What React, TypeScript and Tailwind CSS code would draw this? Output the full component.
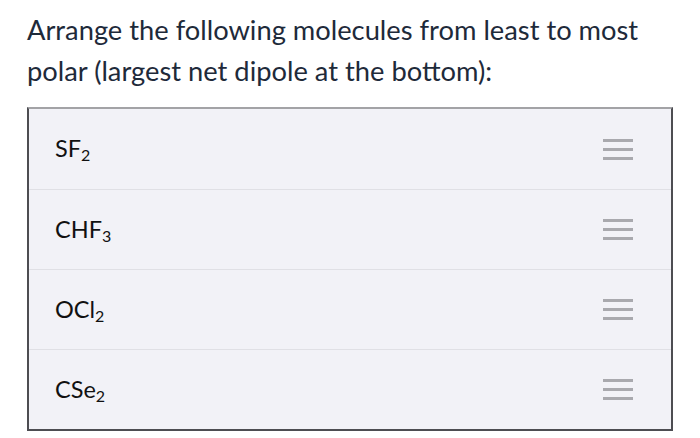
const items = [
  { base: "SF", sub: "2" },
  { base: "CHF", sub: "3" },
  { base: "OCl", sub: "2" },
  { base: "CSe", sub: "2" },
];

function Handle() {
  return (
    <div className="flex w-[30px] flex-col gap-[6px]">
      <div className="h-[3px] bg-[#a9a9ae]" />
      <div className="h-[3px] bg-[#a9a9ae]" />
      <div className="h-[3px] bg-[#a9a9ae]" />
    </div>
  );
}

export default function App() {
  return (
    <div className="h-[438px] w-[700px] bg-white font-['Lato',sans-serif]">
      <div className="pl-[27px] pt-[9px] pr-[20px]">
        <h1 className="text-[27.3px] leading-[41px] text-[#1e2a3a]">
          Arrange the following molecules from least to most
          <br />
          polar (largest net dipole at the bottom):
        </h1>
      </div>
      <div className="ml-[27px] mt-[16px] w-[646px] border-2 border-[#4d4d52] border-t-[#a3a3a6] bg-[#f2f2f7]">
        {items.map((m, i) => (
          <div
            key={m.base}
            className={`flex h-[80px] items-center justify-between pl-[26px] pr-[38px] ${
              i > 0 ? "border-t border-[#e0e0e5]" : ""
            }`}
          >
            <span className="text-[23.5px] text-[#111]">
              {m.base}
              <sub className="text-[16px]">{m.sub}</sub>
            </span>
            <Handle />
          </div>
        ))}
      </div>
    </div>
  );
}
